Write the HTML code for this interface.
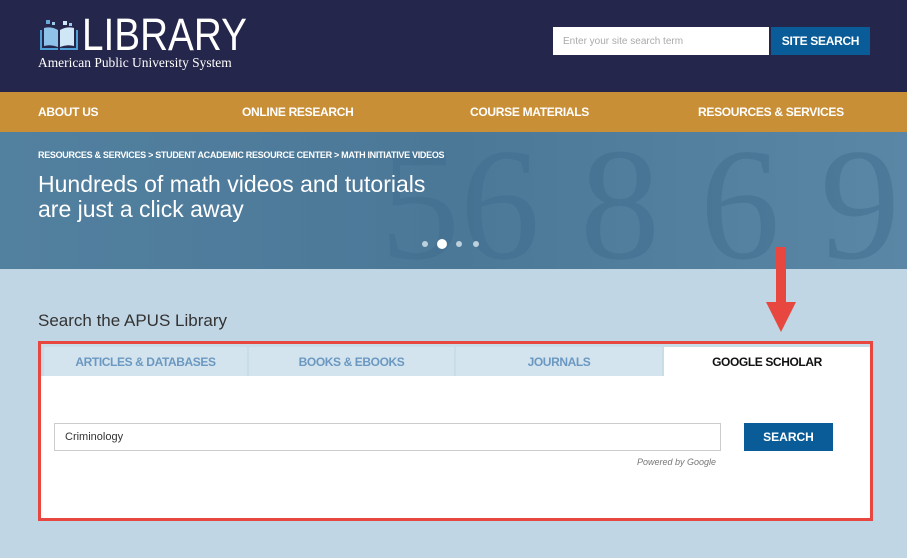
<!DOCTYPE html>
<html><head><meta charset="utf-8"><style>
*{margin:0;padding:0;box-sizing:border-box}
body{width:907px;height:558px;overflow:hidden;background:#c1d6e4;font-family:"Liberation Sans",sans-serif;position:relative}
.hdr{position:absolute;left:0;top:0;width:907px;height:92px;background:#25264b}
.nav{position:absolute;left:0;top:92px;width:907px;height:40px;background:#c98f37;color:#fff;font-weight:bold;font-size:12px;letter-spacing:-0.3px}
.nav span{position:absolute;top:13px}
.ban{position:absolute;left:0;top:132px;width:907px;height:137px;background:linear-gradient(90deg,#52809f,#4c7898 50%,#5a87a5);overflow:hidden}
.abs{position:absolute}
.tab{color:#6b98c0;font-weight:bold;font-size:12px;letter-spacing:-0.4px;text-align:center;line-height:30px}
</style></head><body>
<div class="hdr">
 <svg class="abs" style="left:38px;top:20px" width="42" height="34" viewBox="0 0 42 34">
  <path d="M2 10v20h18v-2H4V10z" fill="#4f9fd6"/><path d="M40 10v20H22v-2h16V10z" fill="#4f9fd6"/>
  <path d="M6 8q7-2 14 2v17q-7-3-14-1z" fill="#8fc2e8"/><path d="M36 8q-7-2-14 2v17q7-3 14-1z" fill="#cfe6f6"/>
  <rect x="8" y="0" width="4" height="4" fill="#6aa8d8"/><rect x="14" y="2" width="3" height="3" fill="#9cc8ea"/><rect x="25" y="1" width="4" height="4" fill="#cfe6f6"/><rect x="31" y="3" width="3" height="3" fill="#9cc8ea"/>
 </svg>
 <div class="abs" style="left:82px;top:11px;color:#fff;font-size:45px;line-height:48px;transform:scaleX(0.86);transform-origin:0 0">LIBRARY</div>
 <div class="abs" style="left:38px;top:56px;color:#fff;font-family:'Liberation Serif',serif;font-size:14px;transform:scaleX(0.96);transform-origin:0 0">American Public University System</div>
 <div class="abs" style="left:553px;top:27px;width:216px;height:28px;background:#fff;color:#aaa;font-size:10px;padding:9px 10px">Enter your site search term</div>
 <div class="abs" style="left:771px;top:27px;width:99px;height:28px;background:#0a5c98;color:#fff;font-weight:bold;font-size:12px;letter-spacing:-0.3px;text-align:center;line-height:28px">SITE SEARCH</div>
</div>
<div class="nav"><span style="left:38px">ABOUT US</span><span style="left:242px">ONLINE RESEARCH</span><span style="left:470px">COURSE MATERIALS</span><span style="left:698px">RESOURCES &amp; SERVICES</span></div>
<div class="ban">
 <div class="abs" style="left:380px;top:-20px;font-size:160px;color:#3e6b8c;font-family:'Liberation Serif',serif;opacity:.45;white-space:nowrap">56 8 6 9</div>
 <div class="abs" style="left:38px;top:18px;color:#fff;font-weight:bold;font-size:9px;letter-spacing:-0.3px;white-space:nowrap">RESOURCES &amp; SERVICES &gt; STUDENT ACADEMIC RESOURCE CENTER &gt; MATH INITIATIVE VIDEOS</div>
 <div class="abs" style="left:38px;top:40px;color:#fff;font-size:23px;line-height:25px">Hundreds of math videos and tutorials<br>are just a click away</div>
 <div class="abs" style="left:422px;top:109px;width:6px;height:6px;border-radius:50%;background:#bcd0de"></div>
 <div class="abs" style="left:437px;top:107px;width:10px;height:10px;border-radius:50%;background:#fff"></div>
 <div class="abs" style="left:456px;top:109px;width:6px;height:6px;border-radius:50%;background:#bcd0de"></div>
 <div class="abs" style="left:473px;top:109px;width:6px;height:6px;border-radius:50%;background:#bcd0de"></div>
</div>
<div class="abs" style="left:38px;top:311px;font-size:17px;color:#333">Search the APUS Library</div>
<svg class="abs" style="left:764px;top:247px" width="34" height="88"><rect x="12" y="0" width="10" height="57" fill="#e8473f"/><path d="M2 55h30l-15 30z" fill="#e8473f"/></svg>
<div class="abs" style="left:38px;top:341px;width:835px;height:180px;border:3px solid #e8473f;background:#fff">
 <div class="abs" style="left:0;top:0;width:829px;height:32px;background:#c9dde9"></div>
 <div class="abs tab" style="left:3px;top:3px;width:203px;height:29px;background:#d3e4ef">ARTICLES &amp; DATABASES</div>
 <div class="abs tab" style="left:208px;top:3px;width:205px;height:29px;background:#d3e4ef">BOOKS &amp; EBOOKS</div>
 <div class="abs tab" style="left:415px;top:3px;width:206px;height:29px;background:#d3e4ef">JOURNALS</div>
 <div class="abs tab" style="left:623px;top:3px;width:206px;height:30px;background:#fff;color:#111">GOOGLE SCHOLAR</div>
 <div class="abs" style="left:13px;top:79px;width:667px;height:28px;border:1px solid #ccc;font-size:11px;color:#333;padding:7px 10px">Criminology</div>
 <div class="abs" style="left:703px;top:79px;width:89px;height:28px;background:#0a5c98;color:#fff;font-weight:bold;font-size:12px;text-align:center;line-height:28px">SEARCH</div>
 <div class="abs" style="left:596px;top:113px;font-size:9px;color:#777;font-style:italic">Powered by Google</div>
</div>
</body></html>
